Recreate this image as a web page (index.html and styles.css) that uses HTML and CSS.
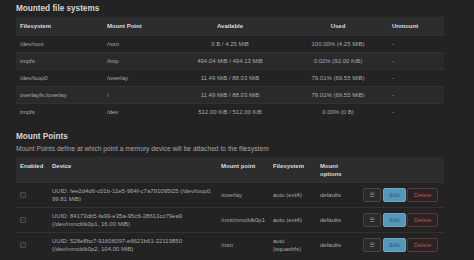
FILE: index.html
```html
<!DOCTYPE html>
<html>
<head>
<meta charset="utf-8">
<link rel="stylesheet" href="styles.css">
</head>
<body>
<div class="page">
  <h3 class="title">Mounted file systems</h3>
  <div class="tbl fs">
    <div class="row head">
      <div class="c">Filesystem</div>
      <div class="c">Mount Point</div>
      <div class="c ctr">Available</div>
      <div class="c ctr">Used</div>
      <div class="c">Unmount</div>
    </div>
    <div class="row">
      <div class="c">/dev/root</div>
      <div class="c">/rom</div>
      <div class="c ctr">0 B / 4.25 MiB</div>
      <div class="c ctr">100.00% (4.25 MiB)</div>
      <div class="c">-</div>
    </div>
    <div class="row alt">
      <div class="c">tmpfs</div>
      <div class="c">/tmp</div>
      <div class="c ctr">494.04 MiB / 494.13 MiB</div>
      <div class="c ctr">0.02% (92.00 KiB)</div>
      <div class="c">-</div>
    </div>
    <div class="row">
      <div class="c">/dev/loop0</div>
      <div class="c">/overlay</div>
      <div class="c ctr">11.49 MiB / 88.03 MiB</div>
      <div class="c ctr">79.01% (69.55 MiB)</div>
      <div class="c">-</div>
    </div>
    <div class="row alt">
      <div class="c">overlayfs:/overlay</div>
      <div class="c">/</div>
      <div class="c ctr">11.49 MiB / 88.03 MiB</div>
      <div class="c ctr">79.01% (69.55 MiB)</div>
      <div class="c">-</div>
    </div>
    <div class="row">
      <div class="c">tmpfs</div>
      <div class="c">/dev</div>
      <div class="c ctr">512.00 KiB / 512.00 KiB</div>
      <div class="c ctr">0.00% (0 B)</div>
      <div class="c">-</div>
    </div>
  </div>

  <h3 class="title t2">Mount Points</h3>
  <p class="desc">Mount Points define at which point a memory device will be attached to the filesystem</p>
  <div class="tbl mp">
    <div class="row head">
      <div class="c">Enabled</div>
      <div class="c">Device</div>
      <div class="c">Mount point</div>
      <div class="c">Filesystem</div>
      <div class="c">Mount<br>options</div>
      <div class="c"></div>
    </div>
    <div class="row">
      <div class="c"><span class="cb"></span></div>
      <div class="c">UUID: fee2d4d6-c01b-11e5-964f-c7a791095f25 (/dev/loop0,<br>99.81 MiB)</div>
      <div class="c">/overlay</div>
      <div class="c">auto (ext4)</div>
      <div class="c">defaults</div>
      <div class="c btns"><span class="btn menu">☰</span><span class="btn edit">Edit</span><span class="btn del">Delete</span></div>
    </div>
    <div class="row">
      <div class="c"><span class="cb"></span></div>
      <div class="c">UUID: 84173db5-fa99-e35a-95c6-28613cc79ea9<br>(/dev/mmcblk0p1, 16.00 MiB)</div>
      <div class="c">/mnt/mmcblk0p1</div>
      <div class="c">auto (ext4)</div>
      <div class="c">defaults</div>
      <div class="c btns"><span class="btn menu">☰</span><span class="btn edit">Edit</span><span class="btn del">Delete</span></div>
    </div>
    <div class="row">
      <div class="c"><span class="cb"></span></div>
      <div class="c">UUID: 528e8bc7-91606097-e6621b61-22119850<br>(/dev/mmcblk0p2, 104.00 MiB)</div>
      <div class="c">/rom</div>
      <div class="c">auto<br>(squashfs)</div>
      <div class="c">defaults</div>
      <div class="c btns"><span class="btn menu">☰</span><span class="btn edit">Edit</span><span class="btn del">Delete</span></div>
    </div>
  </div>
</div>
</body>
</html>
```

FILE: styles.css
```css
html, body {
  margin: 0;
  padding: 0;
  background: #232323;
}
body {
  font-family: "Liberation Sans", Arial, sans-serif;
  font-size: 6px;
  line-height: 8px;
  color: #a9a9a9;
}
.page {
  padding-left: 16px;
  width: 428px;
}
.title {
  margin: 0;
  height: 17px;
  line-height: 17px;
  font-size: 8.2px;
  font-weight: bold;
  color: #d6d6d6;
}
.t2 {
  margin-top: 8px;
}
.desc {
  margin: 0 0 4px 0;
  height: 8px;
  line-height: 8px;
  font-size: 6.7px;
  color: #a6a6a6;
  white-space: nowrap;
}
.row {
  display: grid;
  align-items: center;
  box-sizing: border-box;
  border-top: 1px solid #323232;
}
.head {
  background: #2d2d2d;
  border-top: 0;
  font-weight: bold;
  color: #dcdcdc;
}
.c {
  padding: 0 4px;
  white-space: nowrap;
}
.ctr {
  text-align: center;
}
.fs .row {
  grid-template-columns: 87px 69px 116px 100px 56px;
  height: 17px;
}
.fs .head {
  height: 18px;
}
.fs .alt {
  background: #2a2a2a;
}
.mp .row {
  grid-template-columns: 32px 169px 52px 47px 43px 85px;
  height: 25px;
}
.mp .head {
  align-items: start;
  padding-top: 4.5px;
}
.cb {
  display: block;
  width: 6px;
  height: 6px;
  box-sizing: border-box;
  border: 1px solid #4a4a4a;
  background: #2a2a2a;
  border-radius: 1px;
}
.btns {
  display: flex;
  gap: 1.4px;
  align-items: center;
}
.btn {
  height: 13.4px;
  box-sizing: border-box;
  border: 1px solid;
  border-radius: 2px;
  display: flex;
  align-items: center;
  justify-content: center;
  font-size: 6px;
}
.menu {
  width: 18.4px;
  background: #2a2a2a;
  border-color: #464646;
  color: #aaaaaa;
  font-family: "DejaVu Sans", sans-serif;
}
.edit {
  width: 23.3px;
  background: #5696b9;
  border-color: #6fa8c8;
  color: #2c5d7c;
}
.del {
  width: 30.3px;
  background: #2a2323;
  border-color: #5e3636;
  color: #c0504d;
}
```
